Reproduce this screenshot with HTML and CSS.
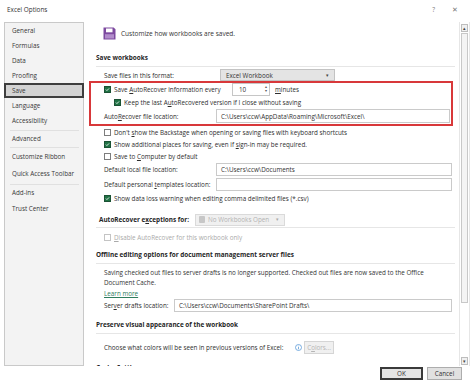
FILE: index.html
```html
<!DOCTYPE html>
<html>
<head>
<meta charset="utf-8">
<link rel="stylesheet" href="styles.css">
</head>
<body>
<div class="titlebar">
  <span class="title">Excel Options</span>
  <span class="tb-btns"><span class="help">?</span><span class="close">✕</span></span>
</div>
<div class="main">
  <nav class="nav">
    <div class="nav-item">General</div>
    <div class="nav-item">Formulas</div>
    <div class="nav-item">Data</div>
    <div class="nav-item">Proofing</div>
    <div class="nav-item selected">Save</div>
    <div class="nav-item">Language</div>
    <div class="nav-item">Accessibility</div>
    <div class="nav-sep"></div>
    <div class="nav-item">Advanced</div>
    <div class="nav-sep short"></div>
    <div class="nav-item tall">Customize Ribbon</div>
    <div class="nav-item tall">Quick Access Toolbar</div>
    <div class="nav-sep"></div>
    <div class="nav-item mid">Add-ins</div>
    <div class="nav-item mid">Trust Center</div>
  </nav>
  <div class="content">
    <div class="intro">
      <svg class="floppy" width="13" height="13" viewBox="0 0 13 13">
        <path d="M0.5 0.5h10.2l1.8 1.8v10.2h-12z" fill="#7d4a9f"/>
        <rect x="3" y="1.5" width="6.5" height="3.8" fill="#fff"/>
        <rect x="2" y="7.2" width="9" height="4.3" fill="#b18ccb"/>
      </svg>
      <span class="intro-text">Customize how workbooks are saved.</span>
    </div>

    <div class="sec-head first">Save workbooks</div>

    <div class="row format-row">
      <span class="label w113">Save files in this format:</span>
      <div class="select">Excel Workbook<span class="caret">▾</span></div>
    </div>

    <div class="redbox">
      <div class="row r1">
        <span class="cb on"><svg viewBox="0 0 7 7"><path d="M1.3 3.6l1.4 1.4 3-3" /></svg></span>
        <span class="label w115">Save <u>A</u>utoRecover information every</span>
        <div class="spin">10<span class="spin-arrows"><span>▴</span><span>▾</span></span></div>
        <span class="minutes"><u>m</u>inutes</span>
      </div>
      <div class="row r2">
        <span class="cb on"><svg viewBox="0 0 7 7"><path d="M1.3 3.6l1.4 1.4 3-3" /></svg></span>
        <span>Keep the last A<u>u</u>toRecovered version if I close without saving</span>
      </div>
      <div class="row r3">
        <span class="label w112">Auto<u>R</u>ecover file location:</span>
        <div class="field in-red">C:\Users\ccw\AppData\Roaming\Microsoft\Excel\</div>
      </div>
    </div>

    <div class="row">
      <span class="cb"></span>
      <span>Don't <u>s</u>how the Backstage when opening or saving files with keyboard shortcuts</span>
    </div>
    <div class="row">
      <span class="cb on"><svg viewBox="0 0 7 7"><path d="M1.3 3.6l1.4 1.4 3-3" /></svg></span>
      <span>Show additional places for saving, even if <u>s</u>ign-in may be required.</span>
    </div>
    <div class="row">
      <span class="cb"></span>
      <span>Save to <u>C</u>omputer by default</span>
    </div>
    <div class="row frow">
      <span class="label w112">Default local f<u>i</u>le location:</span>
      <div class="field">C:\Users\ccw\Documents</div>
    </div>
    <div class="row frow">
      <span class="label w112">Default personal <u>t</u>emplates location:</span>
      <div class="field"></div>
    </div>
    <div class="row">
      <span class="cb on"><svg viewBox="0 0 7 7"><path d="M1.3 3.6l1.4 1.4 3-3" /></svg></span>
      <span>Show data loss warning when editing comma delimited files (*.csv)</span>
    </div>

    <div class="sec-head exc">
      <span class="exc-title">AutoRecover e<u>x</u>ceptions for:</span>
      <div class="select disabled"><span class="wb-icon"></span>No Workbooks Open<span class="caret">▾</span></div>
    </div>
    <div class="row dis">
      <span class="cb"></span>
      <span><u>D</u>isable AutoRecover for this workbook only</span>
    </div>

    <div class="sec-head offline">Offline editing options for document management server files</div>
    <p class="para">Saving checked out files to server drafts is no longer supported. Checked out files are now saved to the Office Document Cache.</p>
    <div class="row link-row"><a class="link">Learn more</a></div>
    <div class="row frow drafts">
      <span class="label w70">Ser<u>v</u>er drafts location:</span>
      <div class="field">C:\Users\ccw\Documents\SharePoint Drafts\</div>
    </div>

    <div class="sec-head preserve">Preserve visual appearance of the workbook</div>
    <div class="row colors-row">
      <span class="label w189">Choose what colors will be seen in previous versions of Excel:</span>
      <svg class="info" width="7" height="7" viewBox="0 0 7 7"><circle cx="3.5" cy="3.5" r="3" fill="none" stroke="#5a9ad8" stroke-width="0.8"/><path d="M3.5 3v2.3M3.5 1.7v0.6" stroke="#5a9ad8" stroke-width="0.8"/></svg>
      <div class="btn-dis">C<u>o</u>lors...</div>
    </div>
    <div class="sec-head cache">Cache Settings</div>
  </div>
  <div class="scrollbar">
    <div class="sb-btn"><span>▴</span></div>
    <div class="sb-thumb"></div>
    <div class="sb-track"></div>
    <div class="sb-btn"><span>▾</span></div>
  </div>
</div>
<div class="footer">
  <div class="btn default">OK</div>
  <div class="btn">Cancel</div>
</div>
</body>
</html>
```
FILE: styles.css
```css
* { box-sizing: border-box; margin: 0; padding: 0; }
html, body { width: 474px; height: 386px; overflow: hidden; background: #fff; }
body { font-family: "Open Sans", "Noto Sans", sans-serif; font-size: 6.3px; color: #2e2e2e; }
u { text-decoration: underline; text-decoration-thickness: 0.5px; text-underline-offset: 1px; }

.titlebar { height: 22px; display: flex; align-items: center; justify-content: space-between; padding: 0 16px 4px 7px; }
.title { font-size: 6.4px; color: #333; }
.tb-btns { display: flex; gap: 17px; color: #777; font-size: 6.5px; }

.main { display: flex; height: 344px; padding-left: 4px; }

.nav { width: 80px; flex: none; background: #f3f3f3; border: 1px solid #c9c9c9; }
.nav-item { height: 15px; line-height: 15px; padding-left: 7px; color: #383838; white-space: nowrap; }
.nav-item.selected { margin: 0 -1px; padding-left: 6px; border: 2px solid #3e3e3e; background: #d3d3d3; line-height: 11px; }
.nav-item.tall { height: 17px; line-height: 17px; }
.nav-item.mid { height: 16px; line-height: 16px; }
.nav-sep { height: 3px; margin: 0 4px 0 5px; border-bottom: 1px solid #e0e0e0; }
.nav-sep.short { height: 2px; }

.content { width: 375px; flex: none; height: 344px; overflow: hidden; padding: 0 4px 0 12px; }

.intro { display: flex; align-items: center; gap: 5px; height: 13px; margin-top: 5px; padding-left: 7px; }
.floppy { flex: none; }
.intro-text { font-size: 6.5px; color: #333; }

.sec-head { height: 15px; line-height: 12px; font-size: 6.4px; font-weight: 700; color: #262626; border-bottom: 1px solid #e6e6e6; white-space: nowrap; }
.sec-head.first { margin-top: 12px; }

.row { display: flex; align-items: center; gap: 3px; height: 12px; margin-left: 8px; white-space: nowrap; }
.label { flex: none; }
.w113 { width: 113px; }
.w115 { width: 115px; }
.w112 { width: 109px; }
.w70 { width: 67px; }
.w189 { width: 189px; }

.format-row { margin-top: 2px; }
.select { display: flex; align-items: center; height: 12px; width: 115px; padding: 0 5px; background: #e4e4e4; border: 1px solid #c3c3c3; color: #333; }
.caret { margin-left: auto; font-size: 5px; color: #444; }

.cb { flex: none; width: 7px; height: 7px; border: 1px solid #7d7d7d; background: #fff; display: flex; }
.cb.on { background: #207245; border-color: #1b5234; }
.cb svg { width: 5px; height: 5px; }
.cb svg path { stroke: #fff; stroke-width: 1.2; fill: none; }

.redbox { border: 2px solid #d8383a; margin: 0 2px 0 -7px; padding: 0 0 1px 13px; }
.redbox .row { margin-left: 0; }
.r1 { height: 12px; }
.r2 { height: 14px; padding-left: 10px; }
.r3 { height: 14px; }
.spin { flex: none; display: flex; align-items: center; width: 38px; height: 13px; border: 1px solid #c6c6c6; padding-left: 6px; background: #fff; }
.spin-arrows { margin-left: auto; display: flex; flex-direction: column; font-size: 4px; line-height: 4px; padding-right: 2px; color: #555; }
.minutes { margin-left: 2px; }

.field { flex: 1; height: 13px; border: 1px solid #cacaca; background: #fff; padding-left: 4px; display: flex; align-items: center; margin-right: 3px; color: #333; }
.field.in-red { height: 14px; margin-right: 1px; }
.frow { height: 15px; }

.sec-head.exc { display: flex; align-items: center; gap: 6px; height: 15px; line-height: 13px; margin-top: 9px; padding-left: 3px; padding-bottom: 1px; }
.select.disabled { width: 90px; background: #f0f0f0; border-color: #dadada; color: #b3b3b3; font-weight: 400; font-size: 6.3px; padding-left: 3px; }
.select.disabled .caret { color: #aaa; }
.wb-icon { width: 6px; height: 7px; background: #c7c7c7; border-radius: 1px; margin-right: 3px; flex: none; }

.dis { margin-top: 3px; color: #aaa; }
.dis .cb { border-color: #c4c4c4; }

.sec-head.offline { margin-top: 6px; }
.para { margin: 4px 3px 0 8px; line-height: 10px; color: #333; }
.link-row { height: 10px; }
.link { color: #2f7d5e; text-decoration: underline; text-decoration-thickness: 0.5px; }

.sec-head.preserve { margin-top: 6px; }
.colors-row { height: 13px; margin-top: 7px; gap: 2px; }
.info { flex: none; }
.btn-dis { width: 30px; height: 13px; border: 1px solid #d5d5d5; background: #f0f0f0; color: #b5b5b5; display: flex; align-items: center; justify-content: center; }
.sec-head.cache { margin-top: 8px; }

.scrollbar { width: 11px; flex: none; margin-right: 4px; display: flex; flex-direction: column; padding: 2px 0 1px; border-left: 1px solid #e6e6e6; border-right: 1px solid #e6e6e6; }
.sb-btn { height: 8px; border: 1px solid #bdbdbd; background: #f0f0f0; display: flex; align-items: center; justify-content: center; font-size: 5px; color: #444; margin: 0 1px; }
.sb-thumb { height: 270px; margin: 1px 1px 0; border: 1px solid #c8c8c8; background: #f4f4f4; }
.sb-track { flex: 1; }

.footer { height: 20px; display: flex; justify-content: flex-end; align-items: flex-start; padding: 1px 12px 0 0; gap: 4px; }
.btn { height: 13px; width: 35px; border: 1px solid #adadad; background: #e1e1e1; display: flex; align-items: center; justify-content: center; color: #333; }
.btn.default { width: 43px; border: 2px solid #3a3a3a; background: #e5e5e5; }
```
